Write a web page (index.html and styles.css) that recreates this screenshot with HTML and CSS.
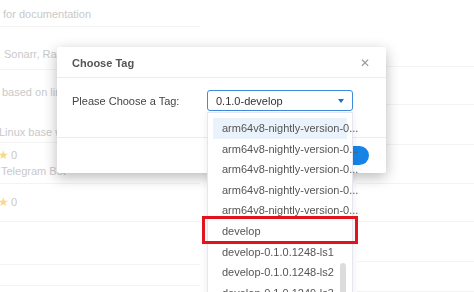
FILE: index.html
```html
<!DOCTYPE html>
<html>
<head>
<meta charset="utf-8">
<link rel="stylesheet" href="styles.css">
</head>
<body>
<div class="page">
  <div class="col left">
    <div class="row r1"><span class="desc">for documentation</span></div>
    <div class="row r2"><span class="desc">Sonarr, Radarr</span></div>
    <div class="row r3"><span class="desc d1">based on linux</span><span class="desc d2">Linux base with</span></div>
    <div class="row r4"><span class="stars"><span class="star">★</span>0</span><span class="desc d3">Telegram Bot</span></div>
    <div class="row r5"><span class="stars"><span class="star">★</span>0</span></div>
    <div class="row r6"></div>
    <div class="row r7"></div>
  </div>
  <div class="col right">
    <div class="row q1"></div>
    <div class="row q2"></div>
    <div class="row q3"></div>
    <div class="row q4"></div>
    <div class="row q5"></div>
    <div class="row q6"></div>
    <div class="row q7"></div>
  </div>
</div>

<div class="modal">
  <div class="modal-header">
    <span class="title">Choose Tag</span>
    <span class="close">✕</span>
  </div>
  <div class="modal-body">
    <span class="label">Please Choose a Tag:</span>
    <div class="select">
      <span>0.1.0-develop</span>
      <span class="caret"></span>
    </div>
  </div>
  <div class="modal-footer">
    <span class="btn"></span>
  </div>
</div>

<div class="dropdown">
  <div class="opt active">arm64v8-nightly-version-0...</div>
  <div class="opt">arm64v8-nightly-version-0...</div>
  <div class="opt">arm64v8-nightly-version-0...</div>
  <div class="opt">arm64v8-nightly-version-0...</div>
  <div class="opt">arm64v8-nightly-version-0...</div>
  <div class="opt">develop</div>
  <div class="opt">develop-0.1.0.1248-ls1</div>
  <div class="opt">develop-0.1.0.1248-ls2</div>
  <div class="opt">develop-0.1.0.1249-ls3</div>
  <div class="scrollbar"></div>
</div>
<div class="highlight-box"></div>
</body>
</html>
```

FILE: styles.css
```css
* { box-sizing: border-box; }
html, body {
  margin: 0;
  padding: 0;
  width: 474px;
  height: 292px;
  overflow: hidden;
  background: #fff;
  font-family: "Liberation Sans", Arial, sans-serif;
}
.page {
  display: flex;
  width: 474px;
  height: 292px;
}
.col {
  display: flex;
  flex-direction: column;
}
.left {
  width: 200px;
}
.right {
  margin-left: 157px;
  flex: 1;
}
.row {
  border-bottom: 1px solid #f3f3f3;
  display: flex;
  flex-direction: column;
  align-items: flex-start;
  font-size: 11px;
  line-height: 13px;
  color: #c9c9c9;
}
.desc { white-space: nowrap; }
.r1 { height: 27px; padding: 8px 0 0 3px; }
.r2 { height: 43px; padding: 21px 0 0 4px; }
.r3 { height: 73px; padding: 16px 0 0 2px; }
.d2 { margin-top: 27px; margin-left: -3px; }
.r4 { height: 41px; padding: 6px 0 0 0; }
.d3 { margin-top: 3px; margin-left: 1px; }
.r5 { height: 38px; padding: 12px 0 0 0; }
.stars { color: #c9c9c9; margin-left: -2px; }
.star { color: #f7d98a; margin-right: 2px; font-size: 12px; }
.r6 { height: 43px; }
.r7 { height: 21px; }
.q1 { height: 67px; }
.q2 { height: 39px; }
.q3 { height: 40px; }
.q4 { height: 39px; }
.q5 { height: 39px; }
.q6 { height: 40px; }
.q7 { height: 30px; }

.modal {
  position: fixed;
  left: 57px;
  top: 47px;
  width: 329px;
  height: 126px;
  background: #fff;
  border-radius: 2px;
  box-shadow: 0 4px 14px rgba(0,0,0,0.28);
  display: flex;
  flex-direction: column;
}
.modal-header {
  height: 31px;
  border-bottom: 1px solid #ececec;
  display: flex;
  align-items: center;
  justify-content: space-between;
  padding: 1px 16px 0 15px;
}
.title {
  font-size: 11px;
  font-weight: bold;
  color: #555;
}
.close {
  font-size: 12px;
  color: #999;
}
.modal-body {
  height: 60px;
  border-bottom: 1px solid #ececec;
  display: flex;
  align-items: flex-start;
  padding: 12px 0 0 15px;
}
.label {
  font-size: 11px;
  color: #444;
  width: 135px;
  line-height: 20px;
  margin-top: 1px;
}
.select {
  width: 146px;
  height: 21px;
  border: 1px solid #3d8ce0;
  border-radius: 3px;
  display: flex;
  align-items: center;
  justify-content: space-between;
  padding: 0 8px 0 8px;
  font-size: 11px;
  color: #333;
}
.caret {
  width: 0;
  height: 0;
  border-left: 3.5px solid transparent;
  border-right: 3.5px solid transparent;
  border-top: 4px solid #1a6fc8;
}
.modal-footer {
  flex: 1;
  display: flex;
  justify-content: flex-end;
  align-items: center;
  padding-right: 17px;
}
.btn {
  width: 60px;
  height: 19px;
  border-radius: 10px;
  background: #1683e6;
}

.dropdown {
  position: fixed;
  left: 207px;
  top: 112px;
  width: 146px;
  height: 200px;
  background: #fff;
  border: 1px solid #e4e7ed;
  border-bottom: none;
  padding: 5px 5px 0 5px;
  box-shadow: 0 2px 8px rgba(0,0,0,0.08);
}
.opt {
  height: 20.6px;
  line-height: 20.6px;
  font-size: 11px;
  color: #555;
  padding-left: 9px;
  white-space: nowrap;
  width: 134px;
}
.opt.active {
  background: #eaf3fc;
}
.scrollbar {
  position: absolute;
  left: 132px;
  top: 150px;
  width: 6px;
  height: 40px;
  border-radius: 3px;
  background: #dcdcdc;
}
.highlight-box {
  position: fixed;
  left: 202px;
  top: 216px;
  width: 156px;
  height: 28px;
  border: 3px solid #e1141e;
}
```
